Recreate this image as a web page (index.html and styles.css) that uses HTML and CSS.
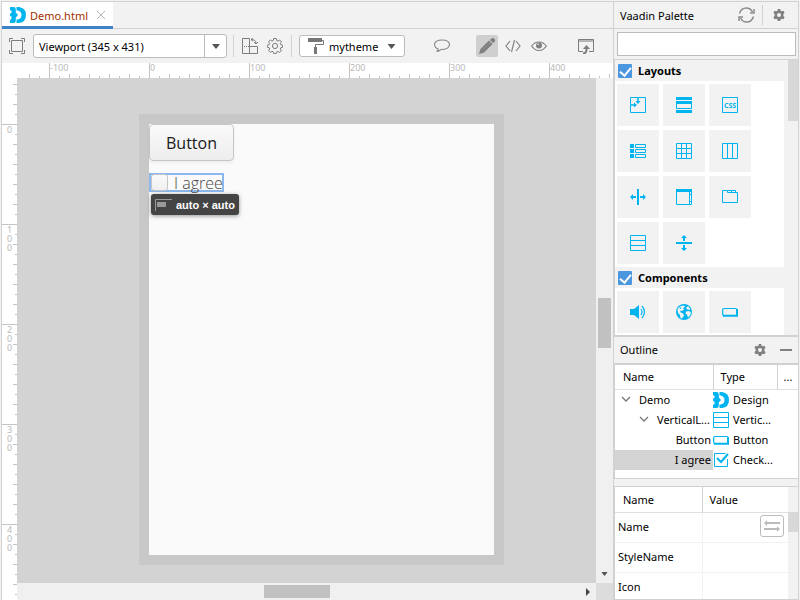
FILE: index.html
```
<!DOCTYPE html>
<html lang="en">
<head>
    <meta charset="UTF-8"/>
    <title>Demo.html - Vaadin Designer</title>
    <link rel="stylesheet" href="styles.css">
</head>
<body>
<!-- shared icons -->
<svg class="defs" aria-hidden="true">
    <symbol id="design" viewBox="0 0 16 16">
        <path d="M0 0h3.500q2.300 0 2.300 2.300v3.200L8 8l-2.200 2.500v3.200Q5.800 16 3.500 16H0v-3l1.500-1V9.500L0 9V6.500l1.500-.5V4L0 3zM6.500 0H9q7 1 7 8t-7 8H6.500v-3.500H8q3.500-1 3.500-4.500T8 3.500H6.500z" fill="#00b4f0"/>
    </symbol>
    <symbol id="gear" viewBox="0 0 12 12">
        <path fill-rule="evenodd" d="M4.8 0h2.4l.4 1.7 1.1.6 1.7-.6 1.2 2.1L10.400 5v2l1.200 1.200-1.200 2.100-1.700-.5-1.100.6-.4 1.600H4.800l-.4-1.600-1.100-.6-1.700.5L.4 8.200 1.600 7V5L.4 3.800l1.200-2.100 1.700.6 1.100-.6zM6 4a2 2 0 1 0 0 4 2 2 0 0 0 0-4z" fill="#808080"/>
    </symbol>
    <symbol id="arrow" viewBox="0 0 8 5"><path d="M0 0h8L4 5z" fill="#555"/></symbol>
    <symbol id="chevron" viewBox="0 0 10 6"><path d="M1 1l4 4 4-4" fill="none" stroke="#777" stroke-width="1.3"/></symbol>
    <symbol id="vertical" viewBox="0 0 16 16"><path d="M.5.5h15v15H.5zM0 5.500h16M0 10.500h16" fill="none" stroke="#00b4f0"/></symbol>
    <symbol id="button" viewBox="0 0 16 16"><rect x=".7" y="4.500" width="14" height="7" rx="1" fill="none" stroke="#00b4f0" stroke-width="1.200"/><path d="M1 11.700h14V5" fill="none" stroke="#00b4f0" stroke-width="2"/></symbol>
</svg>

<div class="ide">
    <main class="editor">
        <div class="tabs">
            <div class="tab">
                <svg width="16" height="16"><use href="#design"/></svg>
                <span>Demo.html</span>
                <button class="close" type="button" aria-label="Close tab">
                    <svg width="8" height="8"><path d="M0 0l8 8M8 0L0 8" stroke="#b4b4b4" fill="none"/></svg>
                </button>
            </div>
        </div>

        <div class="toolbar">
            <button class="tool fit" type="button" aria-label="Fit">
                <svg width="16" height="16" fill="none" stroke="#7d7d7d"><path d="M2.500 2.500h11v11h-11zM.5 4V.5H4M12 .5h3.500V4M15.500 12v3.500H12M4 15.500H.5V12"/></svg>
            </button>
            <div class="combo viewport">
                <select aria-label="Viewport"><option>Viewport (345 x 431)</option></select>
                <span class="combo-arrow"><svg width="8" height="5"><use href="#arrow"/></svg></span>
            </div>
            <span class="line"></span>
            <button class="tool rotate" type="button" aria-label="Rotate">
                <svg width="16" height="16" fill="none" stroke="#7d7d7d"><path d="M.5.5h7v15h-7zM7.500 8.500h8v7h-8"/><path d="M2 8.500h5" stroke-dasharray="1 1"/><path d="M9 1.500q5 0 5 4M11 0L9 1.500 11 3M12 4l2 2 2-2"/></svg>
            </button>
            <button class="tool" type="button" aria-label="Settings">
                <svg width="16" height="16" viewBox="0 0 16 16" fill="none" stroke="#7d7d7d"><path d="M6.700.5h2.600l.4 2 1.300.6 1.700-1.100 1.700 1.800-1.100 1.700.5 1.300 1.900.3v2.200l-1.900.4-.5 1.300 1.100 1.800-1.700 1.700-1.700-1.100-1.300.6-.4 1.600H6.700l-.4-1.800-1.300-.5-1.700 1.100-1.700-1.700L2.700 11l-.6-1.300-1.800-.4V7.100l1.800-.4.6-1.300-1.100-1.700L3.300 2 5 3.100l1.300-.6z"/><circle cx="8" cy="8" r="2.600"/></svg>
            </button>
            <span class="line"></span>
            <div class="combo theme">
                <svg width="16" height="16" fill="#777"><path d="M0 0h14v4H0z"/><path d="M14 2.500h1.500v4h-8v3" fill="none" stroke="#777"/><path d="M6 9h3v7H6z"/></svg>
                <select aria-label="Theme"><option>mytheme</option></select>
                <span class="theme-arrow"><svg width="9" height="5" viewBox="0 0 8 5"><use href="#arrow"/></svg></span>
            </div>
            <button class="tool comment" type="button" aria-label="Comment">
                <svg width="16" height="16" fill="none" stroke="#858585" stroke-width="1.100"><path d="M2.500 13.500q2-.7 1.500-2.500Q.5 9.500.5 6.500.8 2 8 2t7.500 4.500Q15 11.500 7 11.500q-1.500 2-4.500 2z"/></svg>
            </button>
            <button class="tool edit active" type="button" aria-label="Edit">
                <svg width="16" height="16" fill="#7d7d7d"><path d="M0 16l1.500-5L10 2.500 13.500 6 5 14.500z"/><path d="M11 2l1.500-1.500Q14-.5 15.500 1t.3 2.500L14 5z"/><path d="M3 12.500L11.500 4" stroke="#999"/></svg>
            </button>
            <button class="tool" type="button" aria-label="Source">
                <svg width="16" height="16" fill="none" stroke="#858585" stroke-width="1.200"><path d="M5 3L1 8l4 5M11 3l4 5-4 5M9.500 2l-3 12"/></svg>
            </button>
            <button class="tool" type="button" aria-label="Preview">
                <svg width="16" height="16" fill="none" stroke="#808080" stroke-width="1.200"><path d="M.7 8Q3.500 4 8 4t7.300 4Q12.500 12.500 8 12.500T.7 8z"/><circle cx="8" cy="7.500" r="3" fill="#808080" stroke="none"/><circle cx="7" cy="6.200" r=".8" fill="#f2f2f2" stroke="none"/></svg>
            </button>
            <button class="tool external" type="button" aria-label="Open in browser">
                <svg width="16" height="16" fill="none" stroke="#7d7d7d"><path d="M5 13.500H.5V1.500h15v12H11M0 3h16"/><path d="M5 15.500q4 0 3.500-6" stroke-width="2"/><path d="M5 11l3.500-4L12 11z" fill="#7d7d7d" stroke="none"/></svg>
            </button>
        </div>

        <div class="ruler-row">
            <div class="ruler-x">
                <span>-100</span><span>0</span><span>100</span><span>200</span><span>300</span><span>400</span>
            </div>
        </div>

        <div class="stage">
            <div class="ruler-y">
                <span>0</span><span>100</span><span>200</span><span>300</span><span>400</span>
            </div>
            <div class="canvas">
                <div class="page">
                    <button class="v-button" type="button">Button</button>
                    <div class="selected">
                        <label class="v-checkbox"><input type="checkbox"> I agree</label>
                        <div class="size-tip">
                            <svg width="17" height="12"><path d="M.5 12V.5H17" fill="none" stroke="#999"/><path d="M2 3h9v5H2z" fill="#999"/></svg>
                            auto × auto
                        </div>
                    </div>
                </div>
            </div>
            <div class="scroll-y">
                <span class="thumb"></span>
                <svg width="7" height="4" viewBox="0 0 8 5"><use href="#arrow"/></svg>
            </div>
            <div class="scroll-x">
                <span class="thumb"></span>
                <svg width="4" height="8"><path d="M0 0l4 4-4 4z" fill="#444"/></svg>
            </div>
            <div class="scroll-corner"></div>
        </div>
    </main>

    <aside class="side">
        <header class="panel-head">
            <h2>Vaadin Palette</h2>
            <button class="tool refresh" type="button" aria-label="Refresh">
                <svg width="17" height="16" fill="none" stroke="#8c8c8c" stroke-width="1.500"><path d="M1.500 6.500Q3 1 8.500 1q4 0 6 4M15.500 9.500Q14 15 8.500 15q-4 0-6-4"/><path d="M16 2v4h-4M1 14v-4h4"/></svg>
            </button>
            <span class="line"></span>
            <button class="tool" type="button" aria-label="Palette settings"><svg width="12" height="12"><use href="#gear"/></svg></button>
        </header>
        <div class="search"><input type="text" aria-label="Search palette"></div>

        <div class="palette">
            <div class="palette-list">
                <label class="group"><input type="checkbox" checked> Layouts</label>
                <div class="tiles">
                    <button type="button" aria-label="Absolute layout"><svg width="16" height="16" fill="none" stroke="#00b4f0"><path d="M.5.500h15v15H.500z"/><path d="M8 1v4M0 8h5" stroke-width="1.500"/><path d="M5.500 4h5L8 7zM4 5.500v5L7 8z" fill="#00b4f0" stroke="none"/></svg></button>
                    <button type="button" aria-label="Border layout"><svg width="16" height="16" fill="#00b4f0"><path d="M0 0h16v3H0zM0 13h16v3H0zM0 4h16v3H0z"/><path d="M.5 6.500h15v5H.500z" fill="none" stroke="#00b4f0"/></svg></button>
                    <button type="button" aria-label="Css layout"><svg width="16" height="16"><path d="M.5.500h15v15H.500z" fill="none" stroke="#00b4f0"/><text x="8" y="11" class="css-text">CSS</text></svg></button>
                    <button type="button" aria-label="Form layout"><svg width="16" height="16"><path d="M0 1h4v4H0zM0 6h4v4H0zM0 11h4v4H0z" fill="#00b4f0"/><path d="M5.500 1.500h10v3h-10zM5.500 6.500h10v3h-10zM5.500 11.500h10v3h-10z" fill="none" stroke="#00b4f0"/></svg></button>
                    <button type="button" aria-label="Grid layout"><svg width="16" height="16" fill="none" stroke="#00b4f0"><path d="M.5.500h15v15H.500zM5.500 0v16M10.500 0v16M0 5.500h16M0 10.500h16"/></svg></button>
                    <button type="button" aria-label="Horizontal layout"><svg width="16" height="16" fill="none" stroke="#00b4f0"><path d="M.5.500h15v15H.500zM5.500 0v16M10.500 0v16"/></svg></button>
                    <button type="button" aria-label="Horizontal split"><svg width="16" height="16" fill="#00b4f0"><path d="M7 0h2v16H7zM0 8l3-3v2h3v2H3v2zM16 8l-3-3v2h-3v2h3v2z"/></svg></button>
                    <button type="button" aria-label="Panel"><svg width="16" height="16" fill="none" stroke="#00b4f0"><path d="M.5.500h15v15H.500zM13.500 3v13M13 5.500h3M13 12.500h3"/><path d="M0 1.500h16" stroke-width="3"/></svg></button>
                    <button type="button" aria-label="Tab sheet"><svg width="16" height="16" fill="none" stroke="#00b4f0"><path d="M.5 1.500h5v2h10v10H.500zM5.500 1.500h4v2M9.500 1.500h4v2"/></svg></button>
                    <button type="button" aria-label="Vertical layout"><svg width="16" height="16"><use href="#vertical"/></svg></button>
                    <button type="button" aria-label="Vertical split"><svg width="16" height="16" fill="#00b4f0"><path d="M0 7h16v2H0zM8 0l3 3H9v3H7V3H5zM8 16l3-3H9v-3H7v3H5z"/></svg></button>
                </div>
                <label class="group"><input type="checkbox" checked> Components</label>
                <div class="tiles">
                    <button type="button" aria-label="Audio"><svg width="16" height="16"><path d="M0 5h4l5-4v14l-5-4H0z" fill="#00b4f0"/><path d="M11 5q2 3 0 6M12 2q5 6 0 12" fill="none" stroke="#00b4f0" stroke-width="1.200"/></svg></button>
                    <button type="button" aria-label="Browser frame"><svg width="16" height="16"><circle cx="8" cy="8" r="8" fill="#00b4f0"/><path d="M2 4l3-2 3-.5 1 1.500-2 1 1 1.500-2 1.500-1-.5-1 1.500 3 1.500 1 2-2 3-1.500-.5-.5-3L2 9 1.500 6zM10 4l2-2 2.500 3-1 1-2-.5zM10 7.500l3-.5 2 1.500-1 3-2 2-1-3-1.500-1z" fill="#f2f2f2"/><path d="M3.500 3.500l2 0-1.500 2z" fill="#00b4f0"/></svg></button>
                    <button type="button" aria-label="Button"><svg width="16" height="16"><use href="#button"/></svg></button>
                </div>
            </div>
            <div class="side-scroll"><span class="thumb"></span></div>
        </div>

        <header class="panel-head outline-head">
            <h2>Outline</h2>
            <button class="tool" type="button" aria-label="Outline settings"><svg width="12" height="12"><use href="#gear"/></svg></button>
            <button class="tool" type="button" aria-label="Hide"><svg width="12" height="12"><path d="M0 6h12" stroke="#808080" stroke-width="2"/></svg></button>
        </header>
        <div class="outline">
            <table>
                <thead>
                <tr><th>Name</th><th>Type</th><th>...</th></tr>
                </thead>
                <tbody>
                <tr>
                    <td class="level-1"><svg width="10" height="6"><use href="#chevron"/></svg>Demo</td>
                    <td colspan="2" class="type"><svg width="16" height="16"><use href="#design"/></svg>Design</td>
                </tr>
                <tr>
                    <td class="level-2"><svg width="10" height="6"><use href="#chevron"/></svg>VerticalL...</td>
                    <td colspan="2" class="type"><svg width="16" height="16"><use href="#vertical"/></svg>Vertic...</td>
                </tr>
                <tr>
                    <td class="leaf">Button</td>
                    <td colspan="2" class="type"><svg width="16" height="16"><use href="#button"/></svg>Button</td>
                </tr>
                <tr>
                    <td class="leaf current">I agree</td>
                    <td colspan="2" class="type"><svg width="16" height="16"><path d="M14.500 7v7.500h-13v-13h11" fill="none" stroke="#00b4f0"/><path d="M4 6l4 4 7-8" fill="none" stroke="#00b4f0" stroke-width="2"/></svg>Check...</td>
                </tr>
                </tbody>
            </table>
        </div>

        <div class="properties">
            <table>
                <thead>
                <tr><th>Name</th><th>Value</th></tr>
                </thead>
                <tbody>
                <tr>
                    <td>Name</td>
                    <td class="value">
                        <button class="bind" type="button" aria-label="Bind name">
                            <svg width="16" height="12" fill="#bbb"><path d="M0 3l3-3v2h13v2H3v2zM16 9l-3-3v2H0v2h13v2z"/></svg>
                        </button>
                    </td>
                </tr>
                <tr><td>StyleName</td><td></td></tr>
                <tr><td>Icon</td><td></td></tr>
                </tbody>
            </table>
            <div class="side-scroll"><span class="thumb"></span></div>
        </div>
    </aside>
</div>
</body>
</html>
```
FILE: styles.css
```
* {
    box-sizing: border-box;
}

body {
    margin: 0;
    background-color: #f2f2f2;
    color: #000;
    font: 11px "Noto Sans", "Open Sans", sans-serif;
}

button, input, select {
    font: inherit;
    color: inherit;
    margin: 0;
}

svg {
    display: block;
    flex: none;
}

.defs {
    position: absolute;
    width: 0;
    height: 0;
}

.ide {
    display: flex;
    height: 100vh;
    padding: 1px 1px 0;
}

/* editor */
.editor {
    display: flex;
    flex-direction: column;
    flex: 1;
    min-width: 0;
    border-top: 1px solid #d1d1d1;
    border-left: 1px solid #d1d1d1;
}

.tabs {
    display: flex;
    height: 27px;
    border-bottom: 1px solid #d1d1d1;
}

.tab {
    display: flex;
    align-items: center;
    gap: 4px;
    height: 27px;
    padding: 2px 8px 0;
    background-color: #fff;
    border-bottom: 3px solid #4083c9;
    color: #a33000;
}

.close {
    margin-left: 5px;
    padding: 0;
    border: 0;
    background: none;
}

.toolbar {
    display: flex;
    align-items: center;
    height: 34px;
    padding-left: 4px;
}

.tool {
    display: flex;
    align-items: center;
    justify-content: center;
    width: 22px;
    height: 22px;
    padding: 0;
    border: 0;
    background: none;
}

.toolbar .tool {
    margin-right: 4px;
}

.toolbar .fit {
    margin-right: 5px;
}

.toolbar .rotate {
    margin-right: 3px;
}

.toolbar .comment {
    margin: 0 23px 0 26px;
}

.toolbar .active {
    background-color: #cfcfcf;
    border-radius: 2px;
}

.toolbar .external {
    margin-left: 21px;
}

.line {
    width: 1px;
    height: 22px;
    background-color: #d1d1d1;
}

.toolbar .line {
    margin: 0 5px 0 6px;
}

.toolbar .tool + .line {
    margin-left: 1px;
}

.combo {
    display: flex;
    align-items: center;
    background-color: #fff;
    border: 1px solid #bcbcbc;
    border-radius: 3px;
}

.combo select {
    flex: 1;
    min-width: 0;
    padding: 0;
    border: 0;
    background: none;
    appearance: none;
}

.viewport {
    width: 194px;
    height: 24px;
    padding-left: 5px;
}

.combo-arrow {
    display: flex;
    align-items: center;
    justify-content: center;
    width: 22px;
    height: 22px;
    border-left: 1px solid #bcbcbc;
}

.theme {
    gap: 5px;
    width: 106px;
    height: 22px;
    margin-left: 2px;
    padding: 0 8px;
}

/* rulers */
.ruler-row {
    height: 15px;
    padding-left: 20px;
    background-color: #fff;
}

.ruler-x {
    display: flex;
    height: 15px;
    padding-left: 28px;
    color: #b8b8b8;
    font: 9px/9px "Noto Sans", sans-serif;
    background-image: linear-gradient(90deg, #c4c4c4 1px, transparent 1px),
        linear-gradient(90deg, #c4c4c4 1px, transparent 1px),
        linear-gradient(90deg, #c4c4c4 1px, transparent 1px);
    background-size: 100px 15px, 20px 4px, 10px 2px;
    background-position: 27px 0, 7px bottom, 7px bottom;
    background-repeat: repeat-x;
}

.ruler-x span {
    flex: 0 0 100px;
}

.ruler-x span:last-child {
    flex: 1;
}

.stage {
    display: grid;
    grid-template-columns: 15px 1fr 17px;
    grid-template-rows: 1fr 17px;
    flex: 1;
    min-height: 0;
}

.ruler-y {
    grid-row: 1 / 3;
    min-height: 0;
    overflow: hidden;
    padding: 47px 5px 0;
    background-color: #fff;
    color: #b8b8b8;
    font: 9px/9px "Noto Sans", sans-serif;
    background-image: linear-gradient(#c4c4c4 1px, transparent 1px),
        linear-gradient(#c4c4c4 1px, transparent 1px),
        linear-gradient(#c4c4c4 1px, transparent 1px);
    background-size: 15px 100px, 4px 20px, 2px 10px;
    background-position: 0 46px, right 6px, right 6px;
    background-repeat: repeat-y;
}

.ruler-y span {
    display: block;
    width: 5px;
    height: 100px;
    word-break: break-all;
}

/* canvas */
.canvas {
    min-width: 0;
    min-height: 0;
    overflow: hidden;
    padding: 36px 122px;
    background-color: #d3d3d3;
}

.page {
    width: 365px;
    height: 451px;
    border: 10px solid #c8c8c8;
    background-color: #fafafa;
    font: 300 16px "Open Sans", sans-serif;
}

.v-button {
    display: block;
    width: 85px;
    height: 37px;
    padding: 0;
    border: 1px solid #c5c5c5;
    border-radius: 4px;
    background: linear-gradient(#fafafa, #ededed);
    box-shadow: 0 2px 3px rgba(0, 0, 0, 0.05);
    font-weight: 400;
    color: #191919;
}

.selected {
    position: relative;
    width: 75px;
    margin-top: 12px;
    border: 2px solid #8cb8ee;
}

.v-checkbox {
    display: flex;
    align-items: center;
    gap: 6px;
    height: 15px;
    color: #474747;
    line-height: 14px;
    white-space: nowrap;
}

.v-checkbox input {
    flex: none;
    appearance: none;
    width: 17px;
    height: 17px;
    border: 1px solid #c5c5c5;
    border-radius: 3px;
    background: linear-gradient(#fafafa, #efefef);
}

.size-tip {
    position: absolute;
    top: 19px;
    left: 0;
    display: flex;
    align-items: center;
    gap: 4px;
    height: 21px;
    padding: 0 4px;
    border-radius: 3px;
    background-color: #444;
    box-shadow: 0 1px 4px rgba(0, 0, 0, 0.4);
    color: #fff;
    font: bold 11px "Liberation Sans", sans-serif;
    white-space: nowrap;
}

/* scrollbars */
.scroll-y, .scroll-x {
    display: flex;
    align-items: center;
    justify-content: space-between;
    background-color: #f0f0f0;
}

.scroll-y {
    flex-direction: column;
    padding: 220px 0 7px;
}

.scroll-y .thumb {
    width: 13px;
    height: 50px;
    background-color: #c1c1c1;
}

.scroll-x {
    padding: 0 6px 0 247px;
}

.scroll-x .thumb {
    width: 66px;
    height: 13px;
    background-color: #c1c1c1;
}

.scroll-corner {
    background-color: #dcdcdc;
}

/* side panels */
.side {
    display: flex;
    flex-direction: column;
    flex: 0 0 186px;
    border: 1px solid #d1d1d1;
    border-bottom: 0;
}

.panel-head {
    display: flex;
    align-items: center;
    flex: none;
    height: 27px;
    padding: 0 8px 0 6px;
    border-bottom: 1px solid #d1d1d1;
}

.panel-head h2 {
    flex: 1;
    margin: 0;
    font-size: 11px;
    font-weight: 400;
}

.panel-head .refresh {
    margin-right: 5px;
}

.panel-head .line {
    height: 20px;
    margin-right: 5px;
}

.search {
    padding: 3px 2px 3px 3px;
}

.search input {
    display: block;
    width: 100%;
    height: 24px;
    padding: 0 4px;
    border: 1px solid #bcbcbc;
    background-color: #fff;
}

.palette {
    display: flex;
    flex: 1;
    min-height: 0;
    overflow: hidden;
    border: solid #d1d1d1;
    border-width: 1px 0 2px 1px;
}

.palette-list {
    flex: 1;
    background-color: #fff;
}

.side-scroll {
    display: flex;
    justify-content: flex-end;
    flex: 0 0 14px;
    background-color: #f2f2f2;
}

.side-scroll .thumb {
    width: 10px;
    height: 61px;
    background-color: #d8d8d8;
}

.group {
    display: flex;
    align-items: center;
    gap: 6px;
    height: 21px;
    padding-left: 3px;
    background-color: #f2f2f2;
    font-weight: bold;
}

.group input {
    display: flex;
    justify-content: center;
    appearance: none;
    width: 14px;
    height: 14px;
    border-radius: 1px;
    background-color: #4b97df;
}

.group input:checked::after {
    content: "";
    width: 5px;
    height: 9px;
    margin-top: 1px;
    border: solid #fff;
    border-width: 0 2px 2px 0;
    transform: rotate(40deg);
}

.tiles {
    display: grid;
    grid-template-columns: repeat(auto-fill, 42px);
    gap: 4px;
    padding: 3px 2px;
}

.tiles button {
    display: flex;
    align-items: center;
    justify-content: center;
    height: 42px;
    padding: 0;
    border: 0;
    background-color: #f2f2f2;
}

.css-text {
    fill: #00b4f0;
    font: bold 7px "Noto Sans", sans-serif;
    text-anchor: middle;
}

.outline-head {
    padding-right: 1px;
}

.outline-head .tool + .tool {
    margin-left: 4px;
}

table {
    width: 100%;
    border-collapse: collapse;
    table-layout: fixed;
    background-color: #fff;
}

th {
    height: 25px;
    padding: 0 8px;
    border-bottom: 1px solid #e0e0e0;
    font-weight: 400;
    text-align: left;
}

th + th {
    padding-left: 7px;
    border-left: 1px solid #d1d1d1;
}

td {
    padding: 0;
    white-space: nowrap;
}

.outline {
    flex: none;
    padding-bottom: 8px;
    border: solid #d1d1d1;
    border-width: 1px 0 1px 1px;
    background-color: #fff;
}

.outline th:first-child {
    width: 98px;
}

.outline th:last-child {
    width: 21px;
    padding: 0 0 0 6px;
}

.outline td {
    height: 20px;
    line-height: 20px;
}

.outline td svg {
    display: inline-block;
    vertical-align: top;
    margin-top: 6px;
}

.outline .type svg {
    margin: 2px 4px 0 0;
}

.outline .level-1 {
    padding-left: 6px;
}

.outline .level-2 {
    padding-left: 24px;
}

.level-1 svg, .level-2 svg {
    margin-right: 8px;
}

.outline .leaf {
    padding-right: 2px;
    text-align: right;
}

.current {
    background-color: #d4d4d4;
}

.properties {
    display: flex;
    align-items: stretch;
    flex: 0 0 114px;
    min-height: 0;
    overflow: hidden;
    margin-top: 7px;
    border: solid #d1d1d1;
    border-width: 1px 0 1px 1px;
}

.properties table {
    flex: 1;
    align-self: flex-start;
}

.properties th:first-child {
    width: 87px;
}

.properties td {
    height: 30px;
    padding: 0 0 2px 3px;
    border-bottom: 1px solid #f2f2f2;
}

.properties td + td {
    border-left: 1px solid #f2f2f2;
}

.properties .side-scroll {
    flex-basis: 10px;
    padding-top: 25px;
}

.properties .thumb {
    height: 20px;
}

.bind {
    display: flex;
    align-items: center;
    justify-content: center;
    width: 24px;
    height: 22px;
    margin: 0 4px 0 auto;
    padding: 0;
    border: 1px solid #bcbcbc;
    border-radius: 3px;
    background-color: #fff;
}
```
